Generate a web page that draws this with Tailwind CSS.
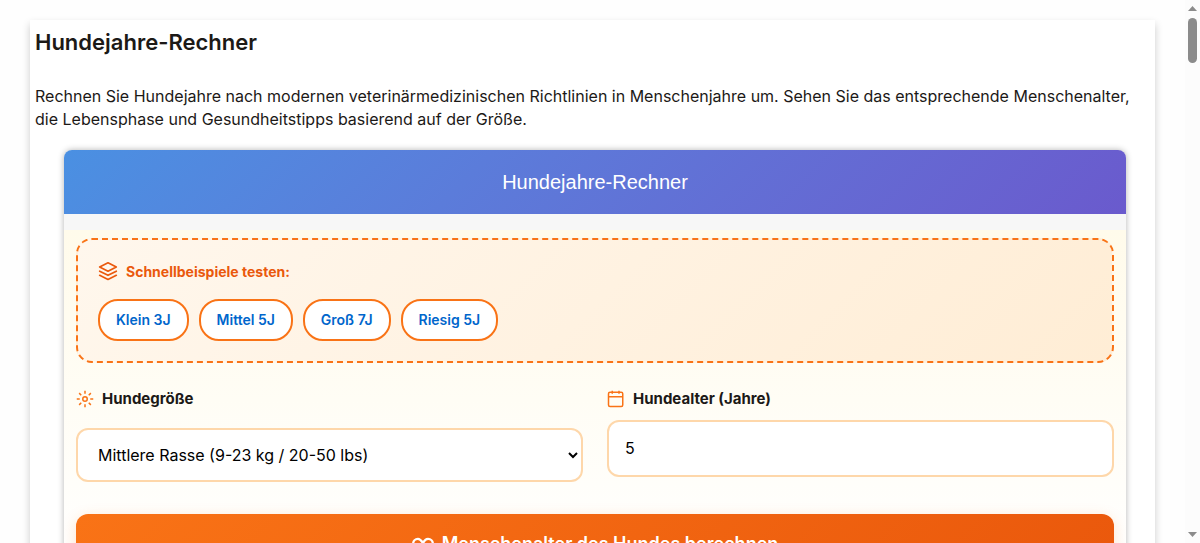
<!DOCTYPE html>
<html lang="de">
<head>
  <meta charset="UTF-8">
  <meta name="viewport" content="width=device-width, initial-scale=1.0">
  <title>Hundejahre-Rechner</title>
  <script src="https://cdn.jsdelivr.net/npm/@tailwindcss/browser@4"></script>
</head>
<body class="bg-[#fefefe] font-['Inter',sans-serif] text-base text-[#1c1917]">
  <div class="flex h-screen overflow-hidden">
    <!-- Main Content -->
    <main class="min-w-0 flex-1 pt-5 px-[30px]">
      <div class="bg-white px-[5px] pb-10 shadow-[0_4px_8px_rgba(0,0,0,0.2)]">
        <h1 class="pt-1.5 text-[22px] leading-8 font-semibold">Hundejahre-Rechner</h1>
        <p class="pt-[27px] leading-[23px]">Rechnen Sie Hundejahre nach modernen veterinärmedizinischen Richtlinien in Menschenjahre um. Sehen Sie das entsprechende Menschenalter, die Lebensphase und Gesundheitstipps basierend auf der Größe.</p>

        <!-- Calculator -->
        <section class="mr-6 ml-[29px] mt-[19px] overflow-hidden rounded-lg bg-[#f7f7f7] shadow-[0_0_6px_rgba(0,0,0,0.3)]">
          <header class="bg-linear-135 from-[#4a90e2] to-[#6a5acd] py-[18px] text-center">
            <h2 class="font-['Liberation_Sans',sans-serif] text-xl leading-7 text-white">Hundejahre-Rechner</h2>
          </header>

          <form class="mt-4 bg-linear-to-b from-[#fffbeb] to-white to-[340px] px-3 pt-2 pb-10">
            <!-- Quick examples -->
            <div class="rounded-2xl border-2 border-dashed border-[#f97316] bg-linear-135 from-[#fff7ed] to-[#ffedd5] p-5">
              <div class="flex items-center gap-2 text-[#ea580c]">
                <svg class="size-5" viewBox="0 0 24 24" fill="none" stroke="currentColor" stroke-width="2" stroke-linecap="round" stroke-linejoin="round">
                  <path d="M12 1 2 6l10 5 10-5-10-5z" />
                  <path d="m2 16 10 5 10-5" />
                  <path d="m2 11 10 5 10-5" />
                </svg>
                <span class="text-sm leading-[23px] font-bold">Schnellbeispiele testen:</span>
              </div>
              <div class="mt-4 flex flex-wrap gap-2.5 text-sm leading-5 font-semibold text-[#0066cc]">
                <button type="button" class="rounded-[20px] border-2 border-[#f97316] bg-white px-4 py-[9px]">Klein 3J</button>
                <button type="button" class="rounded-[20px] border-2 border-[#f97316] bg-white px-4 py-[9px]">Mittel 5J</button>
                <button type="button" class="rounded-[20px] border-2 border-[#f97316] bg-white px-4 py-[9px]">Groß 7J</button>
                <button type="button" class="rounded-[20px] border-2 border-[#f97316] bg-white px-4 py-[9px]">Riesig 5J</button>
              </div>
            </div>

            <!-- Inputs -->
            <div class="mt-6 grid grid-cols-2 items-start gap-6">
              <div>
                <label for="size" class="flex items-center gap-2 text-[15px] leading-[23px] font-bold">
                  <svg class="size-[18px] text-[#f97316]" viewBox="0 0 24 24" fill="none" stroke="currentColor" stroke-width="2">
                    <circle cx="12" cy="12" r="3" />
                    <path d="M12 1v4M12 19v4M1 12h4M19 12h4M4.2 4.2 7 7M17 17l2.8 2.8M4.2 19.8 7 17M17 7l2.8-2.8" />
                  </svg>
                  Hundegröße
                </label>
                <select id="size" class="mt-[18px] block h-[54px] w-full rounded-xl border-2 border-[#fed7aa] bg-white pl-4 text-black">
                  <option>Kleine Rasse (bis 9 kg / 20 lbs)</option>
                  <option selected>Mittlere Rasse (9-23 kg / 20-50 lbs)</option>
                </select>
              </div>
              <div>
                <label for="age" class="flex items-center gap-2 text-[15px] leading-[23px] font-bold">
                  <svg class="size-[18px] text-[#f97316]" viewBox="0 0 24 24" fill="none" stroke="currentColor" stroke-width="2">
                    <rect x="2" y="3" width="19" height="19" rx="2" />
                    <path d="M7 1v4M16 1v4M2 9h19" />
                  </svg>
                  Hundealter (Jahre)
                </label>
                <input id="age" type="text" inputmode="numeric" value="5" class="mt-2.5 block h-[57px] w-full rounded-xl border-2 border-[#fed7aa] bg-white px-4 pb-0.5 text-black">
              </div>
            </div>

            <button type="submit" class="mt-8 flex w-full items-center justify-center gap-2 rounded-xl bg-linear-135 from-[#f97316] to-[#ea580c] py-[18px] text-lg leading-6 font-semibold text-white shadow-[0_4px_15px_rgba(249,115,22,0.2)]">
              <svg class="size-[22px]" viewBox="0 0 24 24" fill="none" stroke="currentColor" stroke-width="2.500" stroke-linecap="round" stroke-linejoin="round">
                <path d="M12 11C10 8 8.500 6.500 6.500 6.500a5 5 0 0 0 0 10.500c3 0 4-3 5.500-6s3-4.500 5.500-4.500a5 5 0 0 1 0 10.500c-3 0-4-3-5.500-6" />
              </svg>
              Menschenalter des Hundes berechnen
            </button>
          </form>
        </section>
      </div>
    </main>

    <!-- Scrollbar -->
    <div class="flex w-[15px] flex-col items-center justify-between bg-[#fcfcfc] py-1.5" aria-hidden="true">
      <div class="flex flex-col items-center gap-[7px]">
        <svg class="h-[5px] w-[9px] fill-[#8b8b8b]" viewBox="0 0 9 5"><path d="M0 5 4.500 0 9 5z" /></svg>
        <div class="h-[45px] w-[9px] rounded-full bg-[#8b8b8b]"></div>
      </div>
      <svg class="h-[5px] w-[9px] fill-[#8b8b8b]" viewBox="0 0 9 5"><path d="M0 0h9L4.500 5z" /></svg>
    </div>
  </div>
</body>
</html>
